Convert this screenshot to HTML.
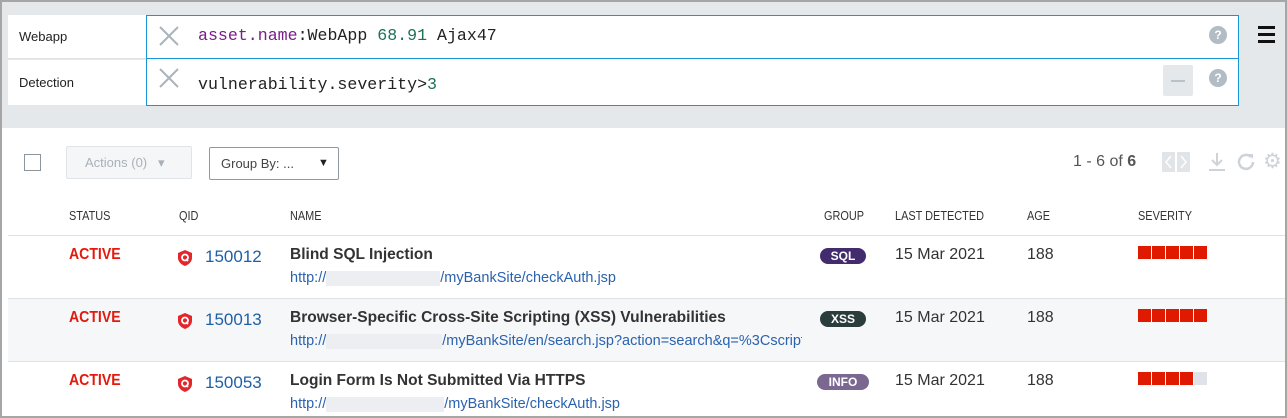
<!DOCTYPE html>
<html><head><meta charset="utf-8"><style>
*{box-sizing:border-box;margin:0;padding:0}
body{width:1287px;height:418px;overflow:hidden;font-family:"Liberation Sans",sans-serif;background:#fff;position:relative}
.frame{position:absolute;inset:0;border:2px solid #a6a6a6}
.top{position:absolute;left:2px;top:2px;right:2px;height:126px;background:#e4e8eb}
.lab{position:absolute;left:8px;width:138px;background:#fff;font-size:13px;color:#222;padding-left:11px;line-height:44px}
.inp{position:absolute;left:146px;width:1093px;background:#fff;border:1.5px solid #1a96d8}
.x{position:absolute;left:11px;width:22px;height:22px}
.code{position:absolute;left:51px;font-family:"Liberation Mono",monospace;font-size:16.6px;color:#222}
.q{position:absolute;width:18px;height:18px;border-radius:50%;background:#b1bcc4;color:#fff;font-size:12px;font-weight:bold;text-align:center;line-height:18px}
.abs{position:absolute}
.hd{position:absolute;top:208px;font-size:13px;color:#333;transform:scaleX(.84);transform-origin:left}
.row{position:absolute;left:8px;right:2px;border-top:1px solid #dde2e6}
.st{position:absolute;left:61px;top:10px;color:#e4180c;font-size:16px;font-weight:bold;transform:scaleX(.88);transform-origin:left}
.qid{position:absolute;left:197px;top:11px;color:#1e5fa8;font-size:17px}
.nm{position:absolute;left:282px;top:10px;color:#333;font-size:16px;font-weight:bold;transform:scaleX(.97);transform-origin:left;white-space:nowrap}
.url{position:absolute;left:282px;top:34px;color:#2b62ae;font-size:14.5px;white-space:nowrap}
.blur{display:inline-block;width:112px;height:15px;background:#eceef1;vertical-align:middle}
.badge{position:absolute;top:12px;height:16px;border-radius:8px;color:#fff;font-size:12px;font-weight:bold;text-align:center;line-height:16px}
.dt{position:absolute;left:887px;top:10px;color:#333;font-size:16px}
.ag{position:absolute;left:1019px;top:10px;color:#333;font-size:16px}
.sv{position:absolute;left:1130px;top:10px;display:flex;gap:1px}
.sv i{width:13px;height:13px;background:#e01a00;display:block}
.sv i.g{background:#dfe3e7}
.shield{position:absolute;left:170px;top:14px;width:14px;height:16px}
</style></head><body>
<div class="top"></div>
<div class="lab" style="top:15px;height:44px;border-bottom:1px solid #dfe3e6">Webapp</div>
<div class="lab" style="top:60px;height:45px;line-height:45px">Detection</div>
<div class="inp" style="top:15px;height:45px;border-bottom-width:2px"><svg class="x" style="top:9px" viewBox="0 0 22 22"><path d="M2 2L20 20M20 2L2 20" stroke="#aab4bb" stroke-width="2"/></svg><span class="code" style="top:10px"><span style="color:#7a1d8a">asset.name</span>:WebApp <span style="color:#1d6e5a">68.91</span> Ajax47</span><span class="q" style="left:1062px;top:10px">?</span></div>
<div class="inp" style="top:59px;height:47px;border-top:none"><svg class="x" style="top:8px" viewBox="0 0 22 22"><path d="M2 2L20 20M20 2L2 20" stroke="#aab4bb" stroke-width="2"/></svg><span class="code" style="top:16px">vulnerability.severity&gt;<span style="color:#1d6e5a">3</span></span><div class="abs" style="left:1016px;top:6px;width:30px;height:31px;background:#e4e8eb;border-radius:2px"><div class="abs" style="left:8px;top:15px;width:14px;height:2px;background:#b9c2c9"></div></div><span class="q" style="left:1062px;top:10px">?</span></div>
<div class="abs" style="left:1258px;top:26px;width:17px"><div style="height:3px;background:#111;margin-bottom:4px"></div><div style="height:3px;background:#111;margin-bottom:4px"></div><div style="height:3px;background:#111"></div></div>
<div class="abs" style="left:24px;top:154px;width:17px;height:17px;border:1px solid #8c959c"></div>
<div class="abs" style="left:66px;top:146px;width:126px;height:33px;background:#f5f6f7;border:1px solid #e0e4e7;border-radius:2px;color:#a9b1b8;font-size:13px;line-height:31px;padding-left:18px">Actions (0) &nbsp;&nbsp;▾</div>
<div class="abs" style="left:209px;top:147px;width:130px;height:33px;border:1px solid #8e9aa3;border-radius:2px;color:#444;font-size:13px;line-height:31px;padding-left:11px">Group By: ...<span style="position:absolute;left:108px;font-size:11px;color:#222">▼</span></div>
<div class="abs" style="left:1073px;top:153px;font-size:16px;color:#555">1 - 6 of <b>6</b></div>
<svg class="abs" style="left:1162px;top:152px" width="28" height="20" viewBox="0 0 28 20"><rect x="0" y="0" width="13" height="20" fill="#e1e5e8"/><rect x="15" y="0" width="13" height="20" fill="#e1e5e8"/><path d="M9 4L4 10L9 16M19 4L24 10L19 16" stroke="#fff" stroke-width="1.5" fill="none"/></svg>
<svg class="abs" style="left:1207px;top:152px" width="20" height="20" viewBox="0 0 20 20"><path d="M10 1V13M5 8L10 13L15 8M2 18H18" stroke="#cdd3d8" stroke-width="2" fill="none"/></svg>
<svg class="abs" style="left:1236px;top:152px" width="20" height="20" viewBox="0 0 20 20"><path d="M15 5A7 7 0 1 0 17 10" stroke="#cdd3d8" stroke-width="2.5" fill="none"/><path d="M12 2L17 2L17 7Z" fill="#cdd3d8"/></svg>
<div class="abs" style="left:1263px;top:149px;color:#cdd3d8;font-size:21px">⚙</div>
<div class="hd" style="left:69px">STATUS</div><div class="hd" style="left:179px">QID</div><div class="hd" style="left:290px">NAME</div><div class="hd" style="left:824px">GROUP</div><div class="hd" style="left:895px">LAST DETECTED</div><div class="hd" style="left:1027px">AGE</div><div class="hd" style="left:1138px">SEVERITY</div>

<div class="row" style="top:235px;height:63px">
<div class="st">ACTIVE</div><svg class="shield" viewBox="0 0 14 16"><path d="M7 0L14 3V8C14 12 10 15 7 16C4 15 0 12 0 8V3Z" fill="#e3262b"/><circle cx="7" cy="7.5" r="3" fill="none" stroke="#fff" stroke-width="1.8"/><path d="M8 9L10 11" stroke="#fff" stroke-width="1.8"/></svg><div class="qid">150012</div>
<div class="nm">Blind SQL Injection</div><div class="url">http://<span class="blur" style="width:114px"></span>/myBankSite/checkAuth.jsp</div>
<div class="badge" style="left:812px;width:46px;background:#432c6e">SQL</div><div class="dt">15 Mar 2021</div><div class="ag">188</div><div class="sv"><i></i><i></i><i></i><i></i><i></i></div></div>
<div class="row" style="top:298px;height:63px;background:#f5f7f9">
<div class="st">ACTIVE</div><svg class="shield" viewBox="0 0 14 16"><path d="M7 0L14 3V8C14 12 10 15 7 16C4 15 0 12 0 8V3Z" fill="#e3262b"/><circle cx="7" cy="7.5" r="3" fill="none" stroke="#fff" stroke-width="1.8"/><path d="M8 9L10 11" stroke="#fff" stroke-width="1.8"/></svg><div class="qid">150013</div>
<div class="nm">Browser-Specific Cross-Site Scripting (XSS) Vulnerabilities</div><div class="url" style="width:512px;overflow:hidden">http://<span class="blur" style="width:116px"></span>/myBankSite/en/search.jsp?action=search&amp;q=%3Cscript</div>
<div class="badge" style="left:812px;width:46px;background:#2b3c3c">XSS</div><div class="dt">15 Mar 2021</div><div class="ag">188</div><div class="sv"><i></i><i></i><i></i><i></i><i></i></div></div>
<div class="row" style="top:361px;height:55px">
<div class="st">ACTIVE</div><svg class="shield" viewBox="0 0 14 16"><path d="M7 0L14 3V8C14 12 10 15 7 16C4 15 0 12 0 8V3Z" fill="#e3262b"/><circle cx="7" cy="7.5" r="3" fill="none" stroke="#fff" stroke-width="1.8"/><path d="M8 9L10 11" stroke="#fff" stroke-width="1.8"/></svg><div class="qid">150053</div>
<div class="nm">Login Form Is Not Submitted Via HTTPS</div><div class="url">http://<span class="blur" style="width:118px"></span>/myBankSite/checkAuth.jsp</div>
<div class="badge" style="left:809px;width:52px;background:#7a6891">INFO</div><div class="dt">15 Mar 2021</div><div class="ag">188</div><div class="sv"><i></i><i></i><i></i><i></i><i class="g"></i></div></div>
<div class="frame"></div>
</body></html>
